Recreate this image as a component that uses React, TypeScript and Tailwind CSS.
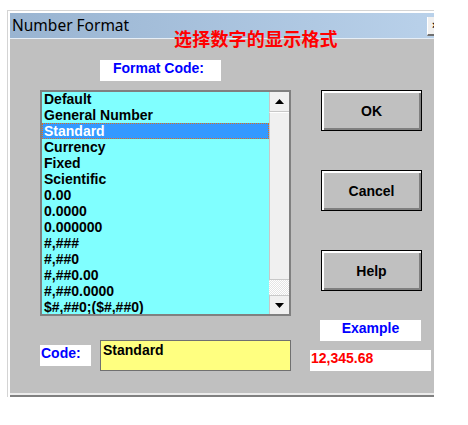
const formats = [
  "Default",
  "General Number",
  "Standard",
  "Currency",
  "Fixed",
  "Scientific",
  "0.00",
  "0.0000",
  "0.000000",
  "#,###",
  "#,##0",
  "#,##0.00",
  "#,##0.0000",
  "$#,##0;($#,##0)",
];

const selected = "Standard";

function DialogButton({ label }: { label: string }) {
  return (
    <button className="ml-[11px] flex h-[41px] w-[101px] items-center justify-center border border-black bg-[#c0c0c0] text-[14px] font-bold text-black shadow-[inset_2px_2px_0_#fff,inset_-2px_-2px_0_#808080]">
      {label}
    </button>
  );
}

function Arrow({ up }: { up?: boolean }) {
  return (
    <svg width="9" height="5" viewBox="0 0 9 5">
      {up ? (
        <polygon points="0,5 9,5 4.5,0" fill="#000" />
      ) : (
        <polygon points="0,0 9,0 4.5,5" fill="#000" />
      )}
    </svg>
  );
}

function ScrollBar() {
  return (
    <div className="flex w-[20px] shrink-0 flex-col bg-[#f0f0f0]">
      <div className="flex h-[20px] items-center justify-center border-b border-l border-[#c8c8c8] bg-[#f0f0f0]">
        <Arrow up />
      </div>
      <div className="h-[168px] border-b border-l border-t border-[#c8c8c8] border-t-white bg-[#f0f0f0]" />
      <div className="flex-1 bg-[repeating-conic-gradient(#ffffff_0_25%,#e4e4e4_0_50%)] bg-[length:2px_2px]" />
      <div className="flex h-[19px] items-center justify-center border-l border-t border-[#c8c8c8] bg-[#f0f0f0]">
        <Arrow />
      </div>
    </div>
  );
}

export default function App() {
  return (
    <main className="min-h-screen bg-white pl-[7px] pt-[10px] font-['Liberation_Sans',Arial,sans-serif]">
      <div className="relative w-[427px] overflow-hidden border-l border-t border-[#d4d4d4] bg-white pl-[2px] pt-[2px]">
        {/* title bar */}
        <div className="flex h-[26px] items-center overflow-hidden border-b border-[#e6eef6] bg-linear-to-r from-[#99b4d1] to-[#b9d1ea] pl-[2px]">
          <span className="font-['Noto_Sans',sans-serif] text-[15.5px] leading-none text-black">
            Number Format
          </span>
          <div className="-mr-[13px] ml-auto mt-[2px] flex h-[19px] w-[20px] shrink-0 items-center border-b-2 border-l border-[#707070] border-l-white bg-[#f0f0f0] pl-[4px] text-[11px] font-bold">
            ×
          </div>
        </div>

        <p className="absolute left-[166px] top-[18px] font-['Noto_Sans_CJK_SC',sans-serif] text-[18px] font-bold leading-[18px] tracking-[0.2px] text-[#ff0000]">
          选择数字的显示格式
        </p>

        {/* body */}
        <div className="flex h-[354px] bg-[#c0c0c0] pl-[30px] text-[14px] font-bold leading-[16px]">
          <div className="flex w-[251px] flex-col pt-[21px]">
            <div className="ml-[60px] h-[21px] w-[121px] bg-white pl-[13px] text-[#0000ff]">
              Format Code:
            </div>

            <div className="mt-[9px] flex h-[226px] border-2 border-[#808080] bg-[#80ffff]">
              <ul className="-mt-[1px] flex-1 overflow-hidden">
                {formats.map((item) => (
                  <li
                    key={item}
                    className={
                      item === selected
                        ? "h-[16px] border border-dotted border-[#e0701c] bg-[#3399ff] pl-[1px] leading-[14px] text-white"
                        : "h-[16px] pl-[2px] text-black"
                    }
                  >
                    {item}
                  </li>
                ))}
              </ul>
              <ScrollBar />
            </div>

            <div className="mt-[24px] flex items-center">
              <div className="h-[21px] w-[51px] bg-white pl-[1px] text-[#0000ff]">
                Code:
              </div>
              <div className="ml-[9px] h-[31px] w-[191px] border border-[#707070] bg-[#ffff80] pl-[2px] pt-[1px] text-black">
                Standard
              </div>
            </div>
          </div>

          <div className="ml-[19px] flex flex-col pt-[51px]">
            <DialogButton label="OK" />
            <div className="mt-[39px]">
              <DialogButton label="Cancel" />
            </div>
            <div className="mt-[39px]">
              <DialogButton label="Help" />
            </div>
            <div className="ml-[10px] mt-[29px] h-[21px] w-[101px] bg-white text-center text-[#0000ff]">
              Example
            </div>
            <div className="mt-[9px] h-[21px] w-[121px] bg-white pl-[1px] text-[#ff0000]">
              12,345.68
            </div>
          </div>
        </div>

        <div className="h-[2px] bg-[#ececec]" />
        <div className="h-[2px] bg-[#808080]" />
      </div>
    </main>
  );
}
